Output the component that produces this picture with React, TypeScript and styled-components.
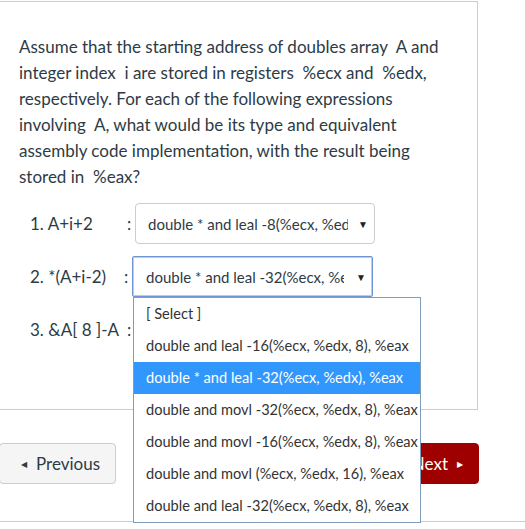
import React from "react";
import styled, { createGlobalStyle } from "styled-components";

// ----------------------------- Global -----------------------------

const GlobalStyle = createGlobalStyle`
  body {
    margin: 0;
    background: #ffffff;
    font-family: Lato, "Helvetica Neue", Helvetica, Arial, sans-serif;
    color: #2d3b45;
  }
`;

// ----------------------------- Layout -----------------------------

const Page = styled.div`
  width: 525px;
  overflow: hidden;
`;

const Card = styled.div`
  box-sizing: border-box;
  width: 478px;
  margin-top: 1px;
  border: 1px solid #c7cdd1;
  border-left: none;
  padding: 32px 0 59px 19px;
`;

const Question = styled.p`
  margin: 0;
  width: 430px;
  font-size: 17px;
  line-height: 26px;
`;

const Answers = styled.div`
  display: flex;
  flex-direction: column;
  gap: 12px;
  margin-top: 13px;
  padding-left: 11px;
`;

const Row = styled.div`
  display: flex;
  align-items: center;
  height: 41px;
`;

const Label = styled.span<{ $w: number }>`
  width: ${(p) => p.$w}px;
  font-size: 17px;
  white-space: nowrap;
`;

const Colon = styled.span`
  font-size: 17px;
  width: 4px;
  margin-right: 4px;
`;

const SelectWrap = styled.div`
  position: relative;
`;

const SelectBox = styled.div<{ $w: number; $focus?: boolean }>`
  box-sizing: border-box;
  display: flex;
  align-items: center;
  width: ${(p) => p.$w}px;
  height: 41px;
  padding: 0 6px 0 ${(p) => (p.$focus ? 13 : 12)}px;
  background: #fff;
  border: 1px solid ${(p) => (p.$focus ? "#6e96d6" : "#c9ced3")};
  border-radius: ${(p) => (p.$focus ? 2 : 4)}px;
  box-shadow: ${(p) => (p.$focus ? "inset 0 0 0 1px #b7cdef" : "none")};
  font-size: 15px;
  color: #2d3b45;
`;

const SelectText = styled.span<{ $w: number }>`
  width: ${(p) => p.$w}px;
  overflow: hidden;
  white-space: nowrap;
`;

const Caret = styled.span`
  margin-left: auto;
  font-size: 10px;
  color: #222;
`;

const Dropdown = styled.ul`
  position: absolute;
  top: 100%;
  left: 1px;
  z-index: 10;
  box-sizing: border-box;
  width: 288px;
  margin: 0;
  padding: 0;
  list-style: none;
  background: #fff;
  border: 1px solid #7f9db9;
`;

const Option = styled.li<{ $active?: boolean }>`
  height: 32px;
  line-height: 32px;
  padding-left: 12px;
  font-size: 14.6px;
  white-space: nowrap;
  overflow: hidden;
  color: ${(p) => (p.$active ? "#fff" : "#333")};
  background: ${(p) => (p.$active ? "#3297fd" : "transparent")};
`;

const Nav = styled.div`
  display: flex;
  justify-content: space-between;
  width: 479px;
  margin-top: 33px;
`;

const NavButton = styled.div<{ $primary?: boolean }>`
  box-sizing: border-box;
  display: flex;
  align-items: center;
  gap: 9px;
  height: 41px;
  padding: 0 ${(p) => (p.$primary ? "15px 0 14px" : "15px 0 21px")};
  border-radius: 4px;
  font-size: 17px;
  background: ${(p) => (p.$primary ? "#9e0000" : "#f5f5f5")};
  color: ${(p) => (p.$primary ? "#fff" : "#2d3b45")};
  border: 1px solid ${(p) => (p.$primary ? "#9e0000" : "#c7cdd1")};
  ${(p) => (p.$primary ? "" : "margin-left: -1px; width: 117px;")}
`;

const Arrow = styled.span`
  font-size: 8px;
`;

const Footer = styled.div`
  margin-top: 37px;
  border-top: 1px solid #c7cdd1;
  height: 10px;
`;

// ----------------------------- Data -----------------------------

const options = [
  "[ Select ]",
  "double and leal -16(%ecx, %edx, 8), %eax",
  "double * and leal -32(%ecx, %edx), %eax",
  "double and movl -32(%ecx, %edx, 8), %eax",
  "double and movl -16(%ecx, %edx, 8), %eax",
  "double and movl (%ecx, %edx, 16), %eax",
  "double and leal -32(%ecx, %edx, 8), %eax",
];

const sp = "\u00a0 ";

// ----------------------------- App -----------------------------

export default function App() {
  return (
    <Page>
      <GlobalStyle />
      <Card>
        <Question>
          Assume that the starting address of doubles array{sp}A and integer index{sp}i are stored in
          registers{sp}%ecx and{sp}%edx, respectively. For each of the following expressions
          involving{sp}A, what would be its type and equivalent assembly code implementation, with
          the result being stored in{sp}%eax?
        </Question>
        <Answers>
          <Row>
            <Label $w={97}>1. A+i+2</Label>
            <Colon>:</Colon>
            <SelectBox $w={240}>
              <SelectText $w={200}>double * and leal -8(%ecx, %edx), %eax</SelectText>
              <Caret>▼</Caret>
            </SelectBox>
          </Row>
          <Row>
            <Label $w={94}>2. *(A+i-2)</Label>
            <Colon>:</Colon>
            <SelectWrap>
              <SelectBox $w={241} $focus>
                <SelectText $w={198}>double * and leal -32(%ecx, %edx), %eax</SelectText>
                <Caret>▼</Caret>
              </SelectBox>
              <Dropdown>
                {options.map((o, i) => (
                  <Option key={o} $active={i === 2}>
                    {o}
                  </Option>
                ))}
              </Dropdown>
            </SelectWrap>
          </Row>
          <Row>
            <Label $w={97}>3. &amp;A[ 8 ]-A</Label>
            <Colon>:</Colon>
            <SelectBox $w={240}>
              <SelectText $w={200}>[ Select ]</SelectText>
              <Caret>▼</Caret>
            </SelectBox>
          </Row>
        </Answers>
      </Card>
      <Nav>
        <NavButton>
          <Arrow>◀</Arrow>
          Previous
        </NavButton>
        <NavButton $primary>
          Next
          <Arrow>▶</Arrow>
        </NavButton>
      </Nav>
      <Footer />
    </Page>
  );
}
